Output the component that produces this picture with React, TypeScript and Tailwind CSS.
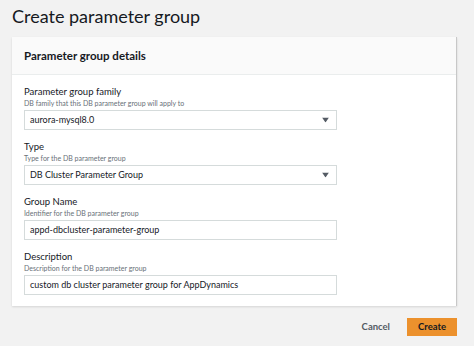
import React from "react";

function Caret() {
	return (
		<svg width="7" height="5" viewBox="0 0 7 5" className="absolute right-[7px] top-1/2 -translate-y-1/2">
			<path d="M0 0h7L3.5 5z" fill="#545b64" />
		</svg>
	);
}

function Field({
	label,
	hint,
	value,
	select = false,
}: {
	label: string;
	hint: string;
	value: string;
	select?: boolean;
}) {
	return (
		<div className="flex flex-col">
			<div className="text-[9.5px] leading-[13px] text-[#16191f]">{label}</div>
			<div className="text-[7px] leading-[10px] text-[#687078]">{hint}</div>
			<div className="relative mt-[2px] h-[20px] w-[313px] border border-[#d5dbdb] bg-white px-[5px] text-[9px] leading-[18px] text-[#16191f]">
				{value}
				{select && <Caret />}
			</div>
		</div>
	);
}

export default function App() {
	return (
		<div
			className="h-[346px] w-[474px] overflow-hidden bg-[#f2f2f2] pl-[12px] pr-[17px]"
			style={{ fontFamily: 'Lato, "Liberation Sans", sans-serif' }}
		>
			<h1 className="pt-[4px] text-[18px] leading-[24px] text-[#16191f]">Create parameter group</h1>
			<div className="mt-[9px] border-r border-[#c8c8c8] bg-white shadow-[0_1px_2px_rgba(0,0,0,0.12)]">
				<div className="flex h-[38px] items-center border-b border-[#eaeded] bg-[#fafafa] px-[12px] text-[11.5px] font-bold text-[#16191f]">
					Parameter group details
				</div>
				<div className="flex flex-col gap-[10px] px-[12px] pt-[10px] pb-[11px]">
					<Field
						label="Parameter group family"
						hint="DB family that this DB parameter group will apply to"
						value="aurora-mysql8.0"
						select
					/>
					<Field
						label="Type"
						hint="Type for the DB parameter group"
						value="DB Cluster Parameter Group"
						select
					/>
					<Field
						label="Group Name"
						hint="Identifier for the DB parameter group"
						value="appd-dbcluster-parameter-group"
					/>
					<Field
						label="Description"
						hint="Description for the DB parameter group"
						value="custom db cluster parameter group for AppDynamics"
					/>
				</div>
			</div>
			<div className="mt-[12px] flex items-center justify-end gap-[17px]">
				<button className="text-[9.5px] font-bold text-[#545b64]">Cancel</button>
				<button className="h-[18px] w-[50px] bg-[#ec912d] text-[9.5px] font-bold text-[#16191f]">
					Create
				</button>
			</div>
		</div>
	);
}
